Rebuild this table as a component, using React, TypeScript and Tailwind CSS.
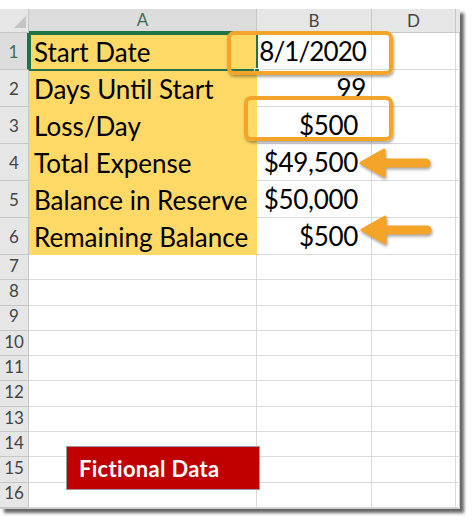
import React from "react";

// Rows of the worksheet that hold data
const rows = [
  { label: "Start Date", value: "8/1/2020", kind: "date" },
  { label: "Days Until Start", value: "99", kind: "number" },
  { label: "Loss/Day", value: "$500", kind: "money" },
  { label: "Total Expense", value: "$49,500", kind: "money" },
  { label: "Balance in Reserve", value: "$50,000", kind: "money" },
  { label: "Remaining Balance", value: "$500", kind: "money" },
];

const emptyRows = [7, 8, 9, 10, 11, 12, 13, 14, 15, 16];

const cellFont = { fontFamily: "Lato, 'Noto Sans', sans-serif" };

function Arrow({ className }: { className: string }) {
  return (
    <svg
      className={className}
      width="80"
      height="36"
      viewBox="0 0 80 36"
      style={{ filter: "drop-shadow(1px 2px 1.5px rgba(0,0,0,0.35))" }}
    >
      <polygon
        points="5,18 28,5 28,31"
        fill="#f4a428"
        stroke="#f4a428"
        strokeWidth="3"
        strokeLinejoin="round"
      />
      <line
        x1="26"
        y1="18"
        x2="70"
        y2="18"
        stroke="#f4a428"
        strokeWidth="9"
        strokeLinecap="round"
      />
    </svg>
  );
}

function App() {
  return (
    <div
      className="relative w-[474px] h-[525px] bg-white overflow-hidden"
      style={cellFont}
    >
      {/* Worksheet */}
      <div className="pt-[9px]">
        <div className="w-[460px] border-r border-b border-[#c9c9c9] shadow-[4px_4px_3px_rgba(0,0,0,0.6)] bg-white">
          <div className="grid grid-cols-[29px_228px_115px_84px_4px] grid-rows-[24px_repeat(6,37px)_repeat(10,25.3px)]">
            {/* Header row */}
            <div className="relative bg-[#e6e6e6] border-r border-b border-[#c6c6c6]">
              <svg className="absolute left-0 top-0" width="29" height="24">
                <polygon points="14,19 26,19 26,7" fill="#c4c4c4" />
              </svg>
            </div>
            <div className="flex items-center justify-center bg-[#dcdcdc] border-r border-b-2 border-b-[#217346] border-r-[#c6c6c6] text-[17px] text-[#3c6e53]">
              A
            </div>
            <div className="flex items-center justify-center bg-[#e6e6e6] border-r border-b border-[#c6c6c6] text-[17px] text-[#444]">
              B
            </div>
            <div className="flex items-center justify-center bg-[#e6e6e6] border-r border-b border-[#c6c6c6] text-[17px] text-[#444]">
              D
            </div>
            <div className="bg-[#e6e6e6] border-b border-[#c6c6c6]" />

            {/* Data rows */}
            {rows.map((row, i) => (
              <React.Fragment key={row.label}>
                <div
                  className={
                    i === 0
                      ? "flex items-end justify-center pb-[5px] bg-[#dcdcdc] border-r-2 border-r-[#217346] border-b border-b-[#c6c6c6] text-[17px] text-[#3c6e53]"
                      : "flex items-end justify-center pb-[5px] bg-[#e6e6e6] border-r border-b border-[#c6c6c6] text-[17px] text-[#444]"
                  }
                >
                  {i + 1}
                </div>
                <div className="flex items-end pl-[5px] pb-[2px] bg-[#ffd966] text-[26px] leading-[32px] tracking-[0px] text-black">
                  {row.label}
                </div>
                <div
                  className={
                    row.kind === "money"
                      ? "flex items-end justify-end pr-[13px] pb-[2px] border-r border-b border-[#dadada] text-[26px] leading-[32px] tracking-[-0.3px] text-black"
                      : row.kind === "date"
                        ? "flex items-end justify-end pr-[5px] pb-[2px] border-r border-b border-[#dadada] text-[26px] leading-[32px] tracking-[-0.9px] text-black"
                        : "flex items-end justify-end pr-[5px] pb-[2px] border-r border-b border-[#dadada] text-[26px] leading-[32px] tracking-[-0.3px] text-black"
                  }
                >
                  {row.value}
                </div>
                <div className="border-r border-b border-[#dadada]" />
                <div className="border-b border-[#dadada]" />
              </React.Fragment>
            ))}

            {/* Empty rows */}
            {emptyRows.map((n) => (
              <React.Fragment key={n}>
                <div className="flex items-end justify-center pb-[1px] bg-[#e6e6e6] border-r border-b border-[#c6c6c6] text-[17px] text-[#444]">
                  {n}
                </div>
                <div className="border-r border-b border-[#dadada]" />
                <div className="border-r border-b border-[#dadada]" />
                <div className="border-r border-b border-[#dadada]" />
                <div className="border-b border-[#dadada]" />
              </React.Fragment>
            ))}
          </div>
        </div>
      </div>

      {/* Selected cell A1 */}
      <div className="absolute left-[29px] top-[33px] w-[229px] h-[38px] border-2 border-[#217346]" />
      <div className="absolute left-[254px] top-[68px] w-[6px] h-[6px] bg-[#217346] border border-white" />

      {/* Highlight boxes */}
      <div className="absolute left-[227px] top-[31px] w-[166px] h-[44px] border-4 border-[#f4a428] rounded-[7px] shadow-[1px_2px_3px_rgba(0,0,0,0.35)]" />
      <div className="absolute left-[244px] top-[96px] w-[149px] h-[45px] border-4 border-[#f4a428] rounded-[7px] shadow-[1px_2px_3px_rgba(0,0,0,0.35)]" />

      {/* Arrows */}
      <Arrow className="absolute left-[356px] top-[145px]" />
      <Arrow className="absolute left-[357px] top-[212px]" />

      {/* Label */}
      <div className="absolute left-[66px] top-[446px] w-[194px] h-[44px] flex items-center pl-[12px] bg-[#c00000] border border-[#9a9a9a] text-white text-[22px] font-bold tracking-[0.3px]">
        Fictional Data
      </div>
    </div>
  );
}

export default App;
